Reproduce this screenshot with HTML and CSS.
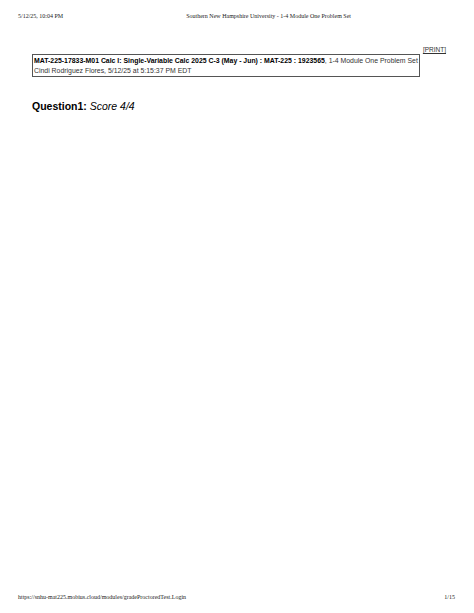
FILE: index.html
```html
<!DOCTYPE html>
<html lang="en">
<head>
    <meta charset="UTF-8">
    <meta name="viewport" content="width=device-width, initial-scale=1.0">
    <title>Southern New Hampshire University - 1-4 Module One Problem Set</title>
    <link rel="stylesheet" href="styles.css">
</head>
<body>
    <div class="page-header">
        <span class="date">5/12/25, 10:04 PM</span>
        <span class="doc-title">Southern New Hampshire University - 1-4 Module One Problem Set</span>
    </div>

    <div class="content">
        <div class="print-row"><span class="print-link">[PRINT]</span></div>
        <div class="info-box">
            <div><b>MAT-225-17833-M01 Calc I: Single-Variable Calc 2025 C-3 (May - Jun) : MAT-225 : 1923565</b>, 1-4 Module One Problem Set</div>
            <div>Cindi Rodriguez Flores, 5/12/25 at 5:15:37 PM EDT</div>
        </div>
        <h2 class="question">Question1: <i>Score 4/4</i></h2>
    </div>

    <div class="page-footer">
        <span>https://snhu-mat225.mobius.cloud/modules/gradeProctoredTest.Login</span>
        <span>1/15</span>
    </div>
</body>
</html>
```

FILE: styles.css
```css
html, body {
    height: 100%;
}
body {
    margin: 0;
    background: #ffffff;
    color: #000;
    font-family: "Liberation Serif", "Times New Roman", serif;
    display: flex;
    flex-direction: column;
}
.page-header {
    display: flex;
    padding: 12px 18px 0 18px;
    font-size: 6px;
    line-height: 8px;
    color: #222;
}
.page-header .doc-title {
    margin-left: 123px;
}
.content {
    margin: 0 28px 0 32px;
    font-family: "Liberation Sans", Arial, sans-serif;
}
.print-row {
    text-align: right;
    margin-top: 26px;
    font-size: 6.5px;
    line-height: 8px;
}
.print-link {
    color: #333;
    text-decoration: underline;
}
.info-box {
    display: inline-block;
    border: 1px solid #555;
    padding: 1px;
    font-size: 6.9px;
    line-height: 9.5px;
    color: #333;
}
.info-box b {
    color: #000;
}
.question {
    margin: 22px 0 0 0;
    font-size: 10.5px;
    line-height: 14px;
    font-weight: bold;
}
.question i {
    font-weight: normal;
}
.page-footer {
    margin-top: auto;
    display: flex;
    justify-content: space-between;
    padding: 0 19px 12px 18px;
    font-size: 6px;
    line-height: 8px;
    color: #222;
}
```
